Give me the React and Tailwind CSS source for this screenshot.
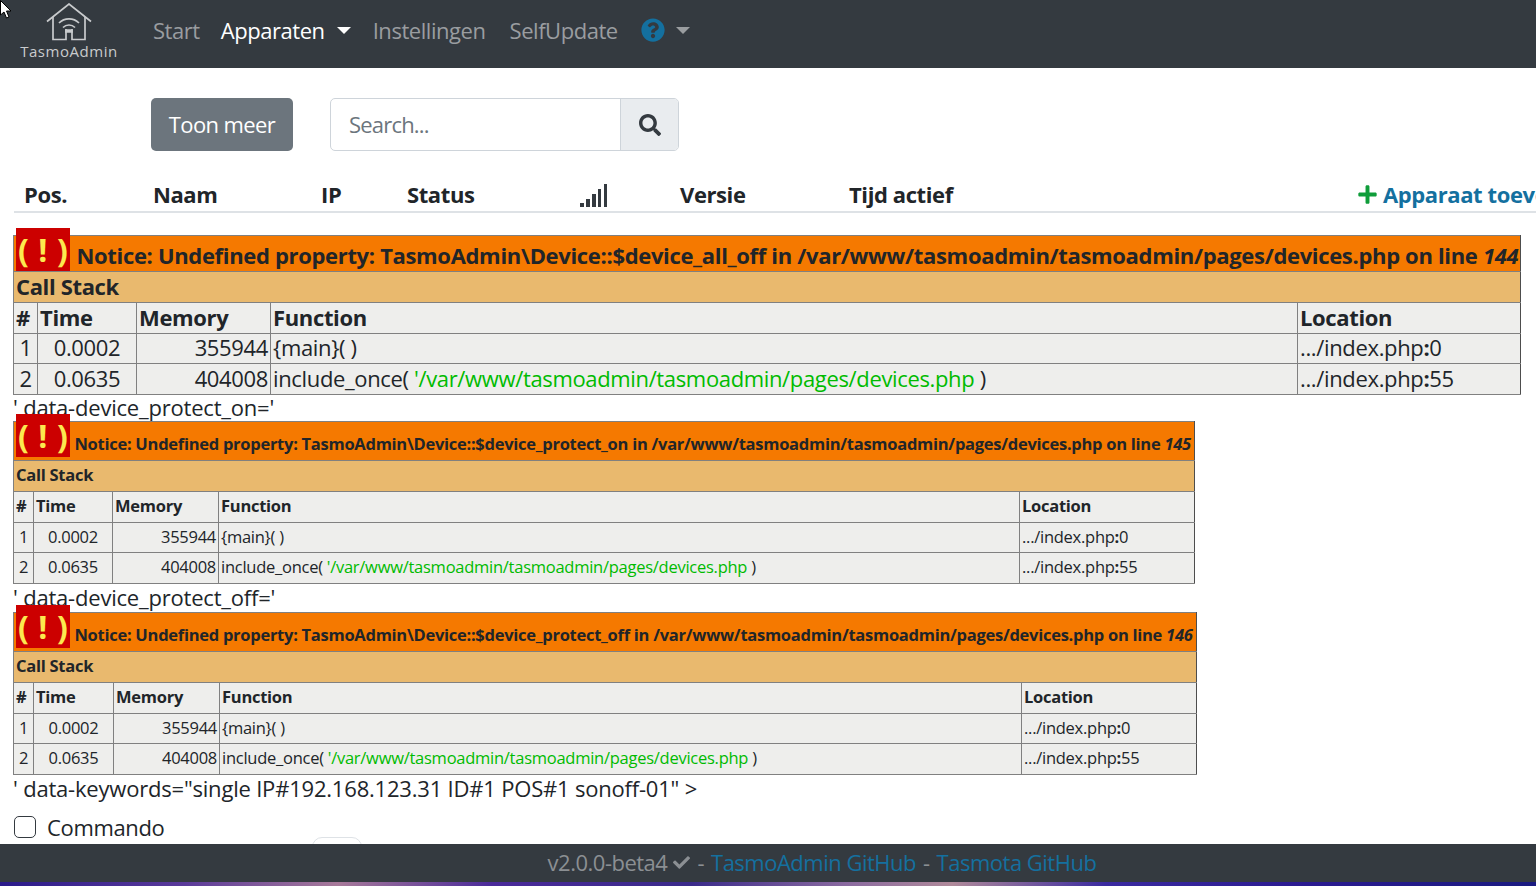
import { FaSearch, FaPlus, FaCheck, FaQuestionCircle } from "react-icons/fa";

const FONT = "[font-family:'Open_Sans','Noto_Sans',sans-serif]";
const FILE = "/var/www/tasmoadmin/tasmoadmin/pages/devices.php";

function Caret({ className }) {
  return <span className={`inline-block w-0 h-0 border-x-[7px] border-x-transparent border-t-[7px] ${className}`} />;
}

function Logo() {
  return (
    <div className="flex flex-col items-center w-[98px] -mt-[5px] text-[#c9cbcd]">
      <svg width="46" height="38" viewBox="0 0 46 38" fill="none" stroke="currentColor" strokeWidth="1.7">
        <path d="M1 18.5 L23 1 L45 18.5" />
        <path d="M7 14 V36.5 H20 V26" />
        <path d="M39 14 V36.5 H26 V26" />
        <path d="M13 20 A14 14 0 0 1 33 20" />
        <path d="M17 24.5 A8.5 8.5 0 0 1 29 24.5" />
        <path d="M20 27 H26 V29 H20 Z" fill="currentColor" />
      </svg>
      <span className="text-[15px] leading-[18px] tracking-[0.55px] whitespace-nowrap mt-[1px]">TasmoAdmin</span>
    </div>
  );
}

function NoticeHead({ big, text, line }) {
  return (
    <span className={big ? "tracking-[-0.33px]" : "tracking-[-0.27px]"}>
      <span className={`relative -top-[2px] bg-[#cc0000] text-[#fce94f] text-[32px] leading-[20px] font-bold tracking-[0.6px] px-[2px] ${big ? "mr-[6px]" : "mr-[4px]"}`}>( ! )</span>
      Notice: Undefined property: TasmoAdmin\Device::${text} in {FILE} on line <i>{line}</i>
    </span>
  );
}

function Notice({ big, text, line, tableWidth, cols, headRow }) {
  const cell = `border border-[#808080] overflow-hidden whitespace-nowrap px-[2px] pt-0 leading-none ${big ? "pb-[3px]" : "pb-[1px]"}`;
  const size = big ? "text-[22px] tracking-[-0.35px]" : "text-[16.5px] tracking-[-0.26px]";
  const dark = "border-t-[#4d4d4d]";
  return (
    <table className={`table-fixed border-collapse bg-[#eeeeec] text-[#212529] ${size} ${tableWidth}`}>
      <colgroup>
        {cols.map((c) => (
          <col key={c} className={c} />
        ))}
      </colgroup>
      <tbody>
        <tr className={headRow}>
          <th colSpan={5} className="border border-[#808080] border-r-[#4d4d4d] bg-[#f57900] text-left font-bold whitespace-nowrap p-0 pl-[2px] leading-[20px] align-bottom pb-[6px]">
            <NoticeHead big={big} text={text} line={line} />
          </th>
        </tr>
        <tr className="h-[31px]">
          <th colSpan={5} className={`${cell} border-r-[#4d4d4d] bg-[#e9b96e] text-left font-bold`}>Call Stack</th>
        </tr>
        <tr className="h-[31px] text-left">
          <th className={`${cell} font-bold`}>#</th>
          <th className={`${cell} font-bold`}>Time</th>
          <th className={`${cell} font-bold`}>Memory</th>
          <th className={`${cell} border-l-[#4d4d4d] font-bold`}>Function</th>
          <th className={`${cell} border-r-[#4d4d4d] font-bold`}>Location</th>
        </tr>
        <tr className="h-[30px]">
          <td className={`${cell} text-center`}>1</td>
          <td className={`${cell} text-center`}>0.0002</td>
          <td className={`${cell} text-right`}>355944</td>
          <td className={`${cell} border-l-[#4d4d4d]`}>{"{main}( )"}</td>
          <td className={`${cell} border-r-[#4d4d4d]`}>.../index.php<b>:</b>0</td>
        </tr>
        <tr className="h-[31px]">
          <td className={`${cell} text-center ${dark}`}>2</td>
          <td className={`${cell} text-center ${dark}`}>0.0635</td>
          <td className={`${cell} text-right ${dark}`}>404008</td>
          <td className={`${cell} border-l-[#4d4d4d] ${dark}`}>
            include_once( <span className="text-[#00bb00]">'{FILE}</span> )
          </td>
          <td className={`${cell} border-r-[#4d4d4d] ${dark}`}>.../index.php<b>:</b>55</td>
        </tr>
      </tbody>
    </table>
  );
}

function AttrLine({ height, children }) {
  return <div className={`${height} flex items-center pb-px text-[22px] tracking-[-0.2px] text-[#212529] whitespace-nowrap`}>{children}</div>;
}

export default function App() {
  return (
    <div className={`relative flex flex-col h-[886px] overflow-hidden bg-white ${FONT}`}>
      <nav className="h-[68px] shrink-0 bg-[#343a40] flex items-center pl-[20px]">
        <Logo />
        <div className="flex items-center ml-[35px] -mt-[8px] text-[#9a9da0] text-[22px] tracking-[-0.45px] leading-[32px]">
          <span>Start</span>
          <span className="ml-[21px] text-white">Apparaten</span>
          <Caret className="ml-[12px] border-t-white" />
          <span className="ml-[22px]">Instellingen</span>
          <span className="ml-[24px]">SelfUpdate</span>
          <FaQuestionCircle className="ml-[23px] text-[#14709f]" size={24} />
          <Caret className="ml-[11px] border-t-[#9a9da0]" />
        </div>
      </nav>

      <main className="flex-1 min-h-0 overflow-hidden">
        <div className="flex items-stretch h-[53px] mt-[30px] ml-[151px] text-[22px] tracking-[-0.6px]">
          <button className="w-[142px] rounded-[5px] bg-[#6c757d] text-white">Toon meer</button>
          <div className="flex ml-[37px] w-[349px] rounded-[5px] border border-[#ced4da] overflow-hidden">
            <div className="flex-1 flex items-center pl-[18px] tracking-[-0.8px] text-[#6c757d]">Search...</div>
            <div className="w-[58px] flex items-center justify-center bg-[#e9ecef] border-l border-[#ced4da] text-[#343a40]">
              <FaSearch size={22} />
            </div>
          </div>
        </div>

        <div className="grid grid-cols-[129px_168px_86px_173px_100px_169px_508px_1fr] items-center ml-[14px] mt-[24px] h-[38px] pt-[3px] pl-[10px] border-b-2 border-[#dee2e6] text-[22px] tracking-[-0.4px] font-bold text-[#212529] whitespace-nowrap overflow-hidden">
          <span>Pos.</span>
          <span>Naam</span>
          <span>IP</span>
          <span>Status</span>
          <svg width="28" height="24" viewBox="0 0 28 24" fill="#343a40" className="-mb-[2px]">
            <rect x="0" y="19" width="4" height="4" />
            <rect x="6" y="15" width="4" height="8" />
            <rect x="12" y="10" width="4" height="13" />
            <rect x="18" y="5" width="3" height="18" />
            <rect x="24" y="0" width="3" height="23" />
          </svg>
          <span>Versie</span>
          <span>Tijd actief</span>
          <span className="flex items-center text-[#14709f]">
            <FaPlus className="text-[#0f9d3a] mr-[5px] shrink-0" size={21} />
            Apparaat toevoegen
          </span>
        </div>

        <div className="ml-[13px] mt-[22px]">
          <Notice
            big
            text="device_all_off"
            line="144"
            tableWidth="w-[1507px]"
            headRow="h-[36px]"
            cols={["w-[24px]", "w-[99px]", "w-[134px]", "w-[1027px]", "w-[223px]"]}
          />
          <AttrLine height="h-[26px]">' data-device_protect_on='</AttrLine>
          <Notice
            text="device_protect_on"
            line="145"
            tableWidth="w-[1181px]"
            headRow="h-[39px]"
            cols={["w-[20px]", "w-[79px]", "w-[106px]", "w-[801px]", "w-[175px]"]}
          />
          <AttrLine height="h-[28px]">' data-device_protect_off='</AttrLine>
          <Notice
            text="device_protect_off"
            line="146"
            tableWidth="w-[1183px]"
            headRow="h-[39px]"
            cols={["w-[20px]", "w-[80px]", "w-[106px]", "w-[802px]", "w-[175px]"]}
          />
          <AttrLine height="h-[27px]">' data-keywords="single IP#192.168.123.31 ID#1 POS#1 sonoff-01" &gt;</AttrLine>
          <label className="flex items-center mt-[11px] h-[28px] text-[22px] tracking-[-0.35px] text-[#212529]">
            <span className="w-[22px] h-[22px] ml-px rounded-[5px] border border-[#343a40] bg-white" />
            <span className="ml-[11px]">Commando</span>
          </label>
          <div className="w-[50px] h-[20px] ml-[299px] -mt-[4px] rounded-[10px] border border-[#dee2e6]" />
        </div>
      </main>

      <footer className="h-[38px] shrink-0 bg-[#343a40] flex items-center justify-center pl-[108px] pb-[2px] text-[22px] tracking-[-0.5px] text-[#8b8f93]">
        <span>v2.0.0-beta4</span>
        <FaCheck className="ml-[6px] mr-[7px] text-[#8b8f93]" size={17} />
        <span className="mr-[7px]">-</span>
        <span className="text-[#14709f]">TasmoAdmin GitHub</span>
        <span className="mx-[7px]">-</span>
        <span className="text-[#14709f]">Tasmota GitHub</span>
      </footer>
      <div className="h-[4px] shrink-0 bg-[linear-gradient(90deg,#2a1a8a_0%,#5a3a9a_12%,#a87a9a_22%,#4a2a9a_32%,#3a2a8a_45%,#8a6aa0_55%,#b08a9a_62%,#3a2aa0_72%,#2a1a90_85%,#1a1a80_100%)]" />

      {/* mouse pointer caught in the screenshot */}
      <svg width="12" height="19" viewBox="0 0 12 19" className="absolute left-0 top-0">
        <path d="M0.5 0.5 V15 L4 12 L6.5 18 L9 17 L6.5 11 H11 Z" fill="#fff" stroke="#000" strokeWidth="1" />
      </svg>
    </div>
  );
}
